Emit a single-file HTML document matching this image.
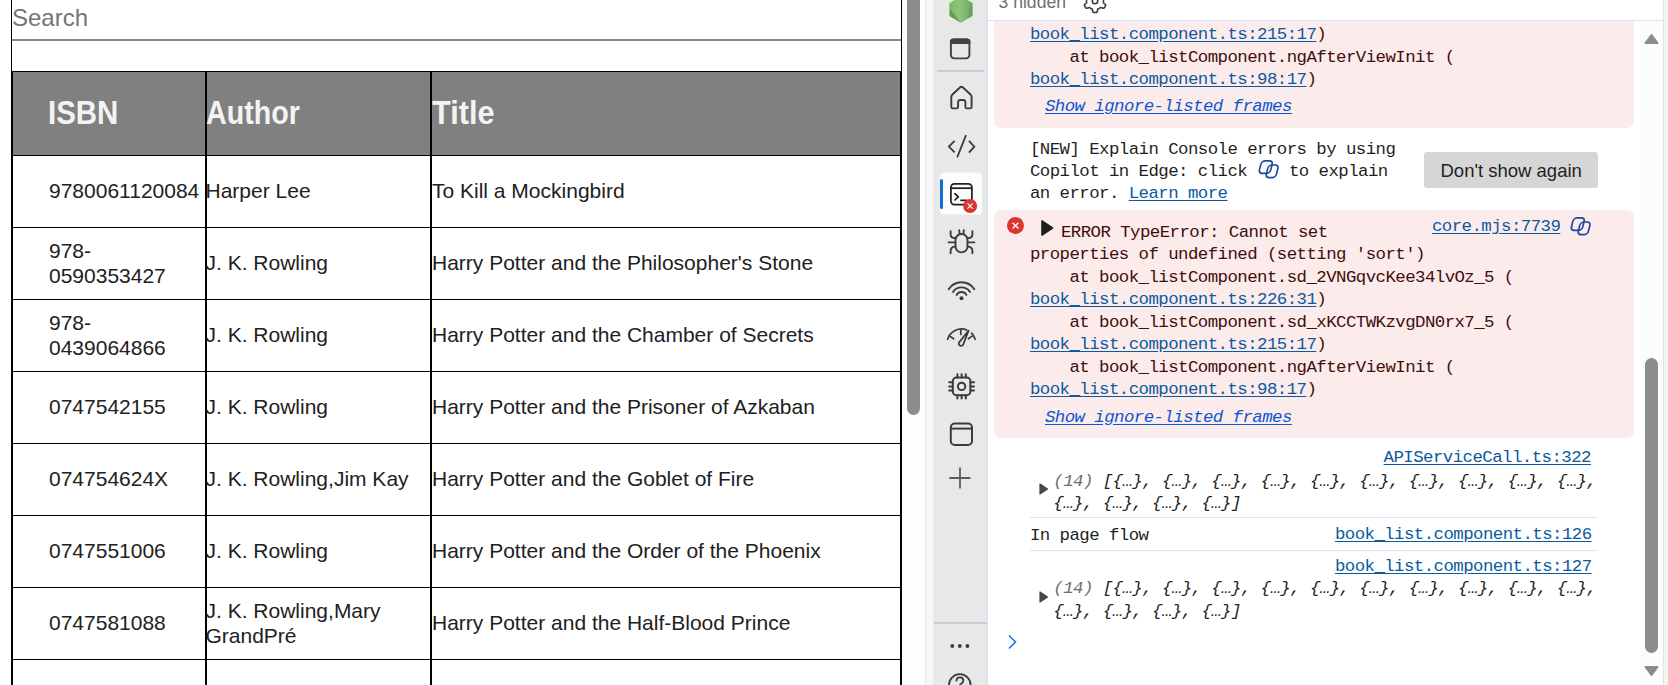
<!DOCTYPE html>
<html><head><meta charset="utf-8">
<style>
html,body{margin:0;padding:0;width:1668px;height:685px;overflow:hidden;background:#fff;position:relative;font-family:"Liberation Sans",sans-serif;}
.a{position:absolute;}
.hl{position:absolute;height:1px;background:#000;}
.vl{position:absolute;width:2px;background:#000;}
.cell{position:absolute;display:flex;align-items:center;font-size:21px;line-height:25px;color:#212121;}
.hd{position:absolute;font-size:33px;font-weight:bold;color:#f3f3f3;line-height:34px;}
.mono{font-family:"Liberation Mono",monospace;font-size:16.46px;line-height:22.5px;white-space:pre;color:#1f1f1f;}
.ln{position:absolute;white-space:pre;font-family:"Liberation Mono",monospace;font-size:17.4px;letter-spacing:-0.564px;line-height:22.5px;}
.lk{color:#0b5aa0;text-decoration:underline;text-underline-offset:2px;}
.lk2{color:#0b57d0;text-decoration:underline;font-style:italic;text-underline-offset:2px;}
.err{color:#410e0b;}
.pink{position:absolute;background:#fcebeb;border-radius:7px;}
.it{font-style:italic;}
</style></head>
<body>
<!-- ============ LEFT PAGE ============ -->
<div class="a" style="left:12px;top:0;width:889px;height:40px;"></div>
<div class="a" style="left:12px;top:1px;font-size:24px;line-height:34px;color:#757575;">Search</div>
<div class="a" style="left:12px;top:39px;width:889px;height:2px;background:#898989;"></div>
<div class="a" style="left:11px;top:0;width:1px;height:71px;background:#000;"></div>
<div class="a" style="left:901px;top:0;width:1px;height:71px;background:#000;"></div>
<!-- header bg -->
<div class="a" style="left:12px;top:72px;width:889px;height:83px;background:#808080;"></div>
<!-- horizontal lines -->
<div class="hl" style="left:11px;top:71px;width:891px;"></div>
<div class="hl" style="left:11px;top:155px;width:891px;"></div>
<div class="hl" style="left:11px;top:227px;width:891px;"></div>
<div class="hl" style="left:11px;top:299px;width:891px;"></div>
<div class="hl" style="left:11px;top:371px;width:891px;"></div>
<div class="hl" style="left:11px;top:443px;width:891px;"></div>
<div class="hl" style="left:11px;top:515px;width:891px;"></div>
<div class="hl" style="left:11px;top:587px;width:891px;"></div>
<div class="hl" style="left:11px;top:659px;width:891px;"></div>
<!-- vertical lines -->
<div class="vl" style="left:11px;top:71px;height:614px;"></div>
<div class="vl" style="left:205px;top:71px;height:614px;"></div>
<div class="vl" style="left:430px;top:71px;height:614px;"></div>
<div class="vl" style="left:900px;top:71px;height:614px;"></div>
<!-- header text -->
<div class="hd" style="left:48px;top:95.5px;transform:scaleX(0.893);transform-origin:0 0;">ISBN</div>
<div class="hd" style="left:206px;top:95.5px;transform:scaleX(0.868);transform-origin:0 0;">Author</div>
<div class="hd" style="left:432px;top:95.5px;transform:scaleX(0.929);transform-origin:0 0;">Title</div>
<!-- rows -->
<div class="cell" style="left:49px;top:155px;width:155px;height:71px;">9780061120084</div>
<div class="cell" style="left:205.5px;top:155px;width:223px;height:71px;">Harper Lee</div>
<div class="cell" style="left:432px;top:155px;width:468px;height:71px;">To Kill a Mockingbird</div>

<div class="cell" style="left:49px;top:227px;width:155px;height:71px;">978-<br>0590353427</div>
<div class="cell" style="left:205.5px;top:227px;width:223px;height:71px;">J. K. Rowling</div>
<div class="cell" style="left:432px;top:227px;width:468px;height:71px;">Harry Potter and the Philosopher's Stone</div>

<div class="cell" style="left:49px;top:299px;width:155px;height:71px;">978-<br>0439064866</div>
<div class="cell" style="left:205.5px;top:299px;width:223px;height:71px;">J. K. Rowling</div>
<div class="cell" style="left:432px;top:299px;width:468px;height:71px;">Harry Potter and the Chamber of Secrets</div>

<div class="cell" style="left:49px;top:371px;width:155px;height:71px;">0747542155</div>
<div class="cell" style="left:205.5px;top:371px;width:223px;height:71px;">J. K. Rowling</div>
<div class="cell" style="left:432px;top:371px;width:468px;height:71px;">Harry Potter and the Prisoner of Azkaban</div>

<div class="cell" style="left:49px;top:443px;width:155px;height:71px;">074754624X</div>
<div class="cell" style="left:205.5px;top:443px;width:223px;height:71px;">J. K. Rowling,Jim Kay</div>
<div class="cell" style="left:432px;top:443px;width:468px;height:71px;">Harry Potter and the Goblet of Fire</div>

<div class="cell" style="left:49px;top:515px;width:155px;height:71px;">0747551006</div>
<div class="cell" style="left:205.5px;top:515px;width:223px;height:71px;">J. K. Rowling</div>
<div class="cell" style="left:432px;top:515px;width:468px;height:71px;">Harry Potter and the Order of the Phoenix</div>

<div class="cell" style="left:49px;top:587px;width:155px;height:71px;">0747581088</div>
<div class="cell" style="left:205.5px;top:587px;width:223px;height:71px;">J. K. Rowling,Mary<br>GrandPré</div>
<div class="cell" style="left:432px;top:587px;width:468px;height:71px;">Harry Potter and the Half-Blood Prince</div>

<!-- page scrollbar -->
<div class="a" style="left:902px;top:0;width:23px;height:685px;background:#fdfdfd;"></div>
<div class="a" style="left:907px;top:-10px;width:13px;height:425px;background:#8c8c8c;border-radius:6.5px;"></div>
<div class="a" style="left:925px;top:0;width:1px;height:685px;background:#e6e6e6;"></div>
<div class="a" style="left:926px;top:0;width:7px;height:685px;background:#f6f6f6;"></div>

<!-- ============ ACTIVITY BAR ============ -->
<div class="a" id="act" style="left:933px;top:0;width:54px;height:685px;background:#e8e8e8;"></div>
<div class="a" style="left:987px;top:0;width:1px;height:685px;background:#cde0fb;"></div>

<!-- ============ CONSOLE ============ -->
<div class="a" style="left:988px;top:0;width:675px;height:685px;background:#fff;"></div>
<div class="a" style="left:988px;top:20px;width:675px;height:1px;background:#d3e3fd;"></div>
<div class="a" style="left:1663px;top:0;width:5px;height:685px;background:#f4f4f4;"></div>
<div class="a" style="left:1663px;top:0;width:1px;height:685px;background:#e3e3e3;"></div>

<div class="pink" style="left:994px;top:14px;width:640px;height:114px;"></div>
<div class="ln" style="left:1030px;top:24.36px;color:#410e0b;"><span class="lk">book_list.component.ts:215:17</span>)</div>
<div class="ln" style="left:1030px;top:46.86px;color:#410e0b;">    at book_listComponent.ngAfterViewInit (</div>
<div class="ln" style="left:1030px;top:69.36px;color:#410e0b;"><span class="lk">book_list.component.ts:98:17</span>)</div>
<div class="ln" style="left:1045px;top:96.36px;"><span class="lk2">Show ignore-listed frames</span></div>
<div class="ln" style="left:1030px;top:138.86px;color:#1f1f1f;">[NEW] Explain Console errors by using</div>
<div class="ln" style="left:1030px;top:161.36px;color:#1f1f1f;">Copilot in Edge: click <span style="display:inline-block;width:22px;"></span> to explain</div>
<div class="ln" style="left:1030px;top:183.36px;color:#1f1f1f;">an error. <span class="lk">Learn more</span></div>
<div class="pink" style="left:994px;top:210px;width:640px;height:228px;"></div>
<div class="ln" style="left:1061px;top:221.86px;color:#410e0b;">ERROR TypeError: Cannot set</div>
<div class="ln" style="left:1432px;top:215.86px;"><span class="lk">core.mjs:7739</span></div>
<div class="ln" style="left:1030px;top:244.36px;color:#410e0b;">properties of undefined (setting 'sort')</div>
<div class="ln" style="left:1030px;top:266.86px;color:#410e0b;">    at book_listComponent.sd_2VNGqvcKee34lvOz_5 (</div>
<div class="ln" style="left:1030px;top:289.36px;color:#410e0b;"><span class="lk">book_list.component.ts:226:31</span>)</div>
<div class="ln" style="left:1030px;top:311.86px;color:#410e0b;">    at book_listComponent.sd_xKCCTWKzvgDN0rx7_5 (</div>
<div class="ln" style="left:1030px;top:334.36px;color:#410e0b;"><span class="lk">book_list.component.ts:215:17</span>)</div>
<div class="ln" style="left:1030px;top:356.86px;color:#410e0b;">    at book_listComponent.ngAfterViewInit (</div>
<div class="ln" style="left:1030px;top:379.36px;color:#410e0b;"><span class="lk">book_list.component.ts:98:17</span>)</div>
<div class="ln" style="left:1045px;top:406.86px;"><span class="lk2">Show ignore-listed frames</span></div>
<div class="ln" style="left:1383.6px;top:447.36px;"><span class="lk">APIServiceCall.ts:322</span></div>
<div class="ln" style="left:1053.3px;top:471.36px;font-style:italic;color:#1f1f1f;"><span style="color:#6e6e6e">(14)</span> [{…}, {…}, {…}, {…}, {…}, {…}, {…}, {…}, {…}, {…},</div>
<div class="ln" style="left:1053.3px;top:492.96px;font-style:italic;color:#1f1f1f;">{…}, {…}, {…}, {…}]</div>
<div class="a" style="left:1030px;top:517px;width:567px;height:1px;background:#d6e3f7;"></div>
<div class="ln" style="left:1030px;top:524.86px;color:#1f1f1f;">In page flow</div>
<div class="ln" style="left:1334.9px;top:523.86px;"><span class="lk">book_list.component.ts:126</span></div>
<div class="a" style="left:1030px;top:550px;width:567px;height:1px;background:#d6e3f7;"></div>
<div class="ln" style="left:1334.9px;top:556.36px;"><span class="lk">book_list.component.ts:127</span></div>
<div class="ln" style="left:1053.3px;top:577.76px;font-style:italic;color:#1f1f1f;"><span style="color:#6e6e6e">(14)</span> [{…}, {…}, {…}, {…}, {…}, {…}, {…}, {…}, {…}, {…},</div>
<div class="ln" style="left:1053.3px;top:600.76px;font-style:italic;color:#1f1f1f;">{…}, {…}, {…}, {…}]</div>

<!-- header cover -->
<div class="a" style="left:988px;top:0;width:675px;height:20px;background:#fff;"></div>
<div class="a" style="left:988px;top:20px;width:675px;height:1px;background:#d3e3fd;"></div>
<div class="a" style="left:998.5px;top:-8.8px;font-size:17.6px;line-height:22px;color:#707070;">3 hidden</div>
<svg class="a" style="left:1080px;top:-14.4px;" width="30" height="30" viewBox="0 0 30 30">
 <path d="M23.5 15.0L23.5 15.4L23.5 15.9L23.4 16.3L23.4 16.8L24.2 17.5L25.3 18.4L25.7 19.1L25.5 19.7L25.2 20.2L25.0 20.8L24.6 21.3L24.3 21.8L23.9 22.2L23.1 22.3L21.8 21.8L20.7 21.4L20.3 21.6L20.0 21.9L19.6 22.1L19.2 22.4L18.9 22.6L18.5 22.8L18.0 22.9L17.7 23.2L17.5 24.2L17.3 25.6L16.8 26.4L16.2 26.4L15.6 26.5L15.0 26.5L14.4 26.5L13.8 26.4L13.2 26.4L12.7 25.6L12.5 24.2L12.3 23.2L12.0 22.9L11.5 22.8L11.1 22.6L10.8 22.4L10.4 22.1L10.0 21.9L9.7 21.6L9.3 21.4L8.2 21.8L6.9 22.3L6.1 22.2L5.7 21.8L5.4 21.3L5.0 20.8L4.8 20.2L4.5 19.7L4.3 19.1L4.7 18.4L5.8 17.5L6.6 16.8L6.6 16.3L6.5 15.9L6.5 15.4L6.5 15.0L6.5 14.6L6.5 14.1L6.6 13.7L6.6 13.2L5.8 12.5L4.7 11.6L4.3 10.9L4.5 10.3L4.8 9.8L5.0 9.3L5.4 8.7L5.7 8.2L6.1 7.8L6.9 7.7L8.2 8.2L9.3 8.6L9.7 8.4L10.0 8.1L10.4 7.9L10.7 7.6L11.1 7.4L11.5 7.2L12.0 7.1L12.3 6.8L12.5 5.8L12.7 4.4L13.2 3.6L13.8 3.6L14.4 3.5L15.0 3.5L15.6 3.5L16.2 3.6L16.8 3.6L17.3 4.4L17.5 5.8L17.7 6.8L18.0 7.1L18.5 7.2L18.9 7.4L19.2 7.6L19.6 7.9L20.0 8.1L20.3 8.4L20.7 8.6L21.8 8.2L23.1 7.7L23.9 7.8L24.3 8.2L24.6 8.7L25.0 9.3L25.2 9.8L25.5 10.3L25.7 10.9L25.3 11.6L24.2 12.5L23.4 13.2L23.4 13.7L23.5 14.1L23.5 14.6Z" fill="none" stroke="#3d3d3d" stroke-width="1.6" stroke-linejoin="round"/>
 <circle cx="15" cy="15" r="2.7" fill="none" stroke="#3d3d3d" stroke-width="1.6"/>
</svg>

<!-- Don't show again button -->
<div class="a" style="left:1424px;top:152px;width:174px;height:36px;background:#d6d6d6;border-radius:3px;"></div>
<div class="a" style="left:1440.5px;top:159.8px;font-size:18.5px;line-height:22px;color:#1f1f1f;white-space:pre;">Don't show again</div>

<!-- copilot icons -->
<svg class="a" style="left:1252px;top:156px;" width="34" height="26" viewBox="0 0 34 26">
 <g fill="none" stroke="#1d4b9e" stroke-width="1.7">
  <rect x="0" y="0" width="11.3" height="12.5" rx="3.4" transform="translate(9.7,4.85) skewX(-14)"/>
  <rect x="0" y="0" width="10.1" height="12.55" rx="3.4" transform="translate(16.6,9) skewX(-14)"/>
 </g>
</svg>
<svg class="a" style="left:1563.7px;top:212.5px;" width="34" height="26" viewBox="0 0 34 26">
 <g fill="none" stroke="#1d4b9e" stroke-width="1.7">
  <rect x="0" y="0" width="11.3" height="12.5" rx="3.4" transform="translate(9.7,4.85) skewX(-14)"/>
  <rect x="0" y="0" width="10.1" height="12.55" rx="3.4" transform="translate(16.6,9) skewX(-14)"/>
 </g>
</svg>

<!-- error circle + triangles -->
<svg class="a" style="left:1000px;top:210px;" width="60" height="30" viewBox="0 0 60 30">
 <circle cx="15.5" cy="15.6" r="8.5" fill="#dc3532"/>
 <path d="M12.6 12.7 L18.4 18.5 M18.4 12.7 L12.6 18.5" stroke="#fff" stroke-width="1.3"/>
 <path d="M42 11 L42 25 L52.5 18 Z" fill="#1f1f1f" stroke="#1f1f1f" stroke-width="1.6" stroke-linejoin="round"/>
</svg>
<svg class="a" style="left:1030px;top:475px;" width="24" height="30" viewBox="0 0 24 30">
 <path d="M10 9 L10 19 L17.5 14 Z" fill="#474747" stroke="#474747" stroke-width="1.2" stroke-linejoin="round"/>
</svg>
<svg class="a" style="left:1030px;top:583px;" width="24" height="30" viewBox="0 0 24 30">
 <path d="M10 9 L10 19 L17.5 14 Z" fill="#474747" stroke="#474747" stroke-width="1.2" stroke-linejoin="round"/>
</svg>
<!-- prompt -->
<svg class="a" style="left:1000px;top:630px;" width="24" height="24" viewBox="0 0 24 24">
 <path d="M9 5.5 L15.5 12 L9 18.5" fill="none" stroke="#1a73e8" stroke-width="1.6"/>
</svg>

<!-- console scrollbar -->
<div class="a" style="left:1640px;top:21px;width:23px;height:664px;background:#fcfcfc;"></div>
<div class="a" style="left:1645px;top:358px;width:13px;height:295px;background:#8c8c8c;border-radius:6.5px;"></div>
<svg class="a" style="left:1640px;top:28px;" width="23" height="22" viewBox="0 0 23 22">
 <path d="M11.5 7 L17.5 15 L5.5 15 Z" fill="#8c8c8c" stroke="#8c8c8c" stroke-width="2" stroke-linejoin="round"/>
</svg>
<svg class="a" style="left:1640px;top:660px;" width="23" height="22" viewBox="0 0 23 22">
 <path d="M5.5 7 L17.5 7 L11.5 15 Z" fill="#8c8c8c" stroke="#8c8c8c" stroke-width="2" stroke-linejoin="round"/>
</svg>

<!-- ============ ACTIVITY BAR ICONS ============ -->
<svg class="a" style="left:933px;top:0;" width="54" height="685" viewBox="0 0 54 685">
 <!-- node hex -->
 <defs><linearGradient id="ng" x1="0" y1="0" x2="1" y2="0"><stop offset="0" stop-color="#7fbf63"/><stop offset="0.45" stop-color="#8fc27a"/><stop offset="1" stop-color="#6aa75c"/></linearGradient></defs>
 <g transform="translate(28,9.5)">
  <polygon points="0,-13.2 11.4,-6.6 11.4,6.6 0,13.2 -11.4,6.6 -11.4,-6.6" fill="url(#ng)"/>
  <polygon points="-11.4,-1.5 -11.4,6.6 -0.3,13.2" fill="#619f51"/>
  <polygon points="-11.4,-6.6 -11.4,-1.5 -8.5,-3.5" fill="#78b35f"/>
  <polygon points="11.4,-6.6 11.4,6.6 7,8.6 9,-2" fill="#659f55" opacity="0.8"/>
 </g>
 <!-- window icon -->
 <rect x="17.9" y="39.5" width="18.5" height="18.9" rx="3.3" fill="none" stroke="#424242" stroke-width="1.9"/>
 <rect x="16.95" y="38.55" width="20.4" height="5.4" rx="3" fill="#424242"/>
 <rect x="16.95" y="41" width="20.4" height="3" fill="#424242"/>
 <!-- separator -->
 <rect x="4" y="70" width="47" height="2" fill="#c9cdd3"/>
 <!-- home -->
 <path d="M18.3 97 Q18.3 95.5 19.4 94.5 L27.2 87.3 Q28.45 86.2 29.7 87.3 L37.5 94.5 Q38.6 95.5 38.6 97 L38.6 106.9 Q38.6 108.4 37.1 108.4 L33.9 108.4 Q32.4 108.4 32.4 106.9 L32.4 102.2 Q32.4 100 30.2 100 L27.3 100 Q25.1 100 25.1 102.2 L25.1 106.9 Q25.1 108.4 23.6 108.4 L19.8 108.4 Q18.3 108.4 18.3 106.9 Z" fill="none" stroke="#3a3a3a" stroke-width="1.9" stroke-linejoin="round"/>
 <!-- code -->
 <path d="M21.6 140.8 L15.9 146.6 L21.6 152.4 M36 140.8 L41.3 146.7 L36 152.6 M33 135.2 L24.2 157.3" fill="none" stroke="#3a3a3a" stroke-width="1.8" stroke-linecap="butt" stroke-linejoin="miter"/>
 <!-- console tab selected -->
 <rect x="7" y="172.6" width="42" height="42" rx="4" fill="#fcfcfc"/>
 <rect x="7" y="179" width="3" height="30" rx="1.5" fill="#0c70cf"/>
 <rect x="17.9" y="183.9" width="21" height="20.8" rx="3.6" fill="none" stroke="#1f1f1f" stroke-width="1.75"/>
 <path d="M17.9 188.2 L38.9 188.2" stroke="#1f1f1f" stroke-width="1.75"/>
 <path d="M21.9 193.6 L25.3 196.8 L21.9 200 M28 200.3 L33.5 200.3" fill="none" stroke="#1f1f1f" stroke-width="1.7" stroke-linecap="round" stroke-linejoin="round"/>
 <circle cx="37.1" cy="206" r="7" fill="#d8352f"/>
 <path d="M34.5 203.4 L39.7 208.6 M39.7 203.4 L34.5 208.6" stroke="#fff" stroke-width="1.1"/>
 <!-- bug -->
 <g fill="none" stroke="#3c3c3c" stroke-width="1.9" stroke-linecap="round" stroke-linejoin="round">
  <rect x="22.5" y="234" width="12" height="18.4" rx="6"/>
  <path d="M26.2 230.3 L26.6 233.6 M30.8 230.3 L30.4 233.6"/>
  <path d="M17.6 231.2 L17.6 234.6 Q17.6 238.2 22.3 238.2 M39.4 231.2 L39.4 234.6 Q39.4 238.2 34.7 238.2"/>
  <path d="M15.6 242.4 L22.3 242.4 M34.7 242.4 L41.4 242.4"/>
  <path d="M22.3 246.6 Q17.6 246.6 17.6 251.2 L17.6 253.2 M34.7 246.6 Q39.4 246.6 39.4 251.2 L39.4 253.2"/>
 </g>
 <!-- wifi -->
 <g fill="none" stroke="#3c3c3c" stroke-width="1.9" stroke-linecap="round">
  <path d="M15.67 289.17 A15.3 15.3 0 0 1 41.33 289.17"/>
  <path d="M20.03 292 A10.1 10.1 0 0 1 36.97 292"/>
  <path d="M23.64 294.92 A5.5 5.5 0 0 1 33.36 294.92"/>
 </g>
 <circle cx="28.5" cy="298.3" r="2" fill="#3c3c3c"/>
 <!-- gauge -->
 <g fill="none" stroke="#3c3c3c" stroke-width="1.75" stroke-linecap="round" stroke-linejoin="round">
  <path d="M14.65 339.23 A14.34 14.34 0 0 1 33.60 329.94 M38.60 333.22 A14.34 14.34 0 0 1 42.15 339.23"/>
  <path d="M27.8 329.8 L27.8 334.4 M16.8 336.1 L20.6 338.8 M39.1 336.1 L35.4 338.8"/>
  <path d="M35.6 330.6 L30.24 344.43 A2.3 2.3 0 1 1 26.31 342.16 Z"/>
 </g>
 <!-- chip -->
 <g fill="none" stroke="#3c3c3c" stroke-width="2" stroke-linecap="round" stroke-linejoin="round">
  <rect x="19.8" y="377.6" width="17.6" height="17.6" rx="3.6"/>
  <circle cx="28.6" cy="386.4" r="3.7"/>
  <path d="M24.4 377.6 V374.2 M28.6 377.6 V374.2 M32.8 377.6 V374.2 M24.4 395.2 V398.6 M28.6 395.2 V398.6 M32.8 395.2 V398.6 M19.8 382.2 H16.2 M19.8 386.4 H16.2 M19.8 390.6 H16.2 M37.4 382.2 H41 M37.4 386.4 H41 M37.4 390.6 H41"/>
 </g>
 <!-- app window -->
 <g fill="none" stroke="#3c3c3c" stroke-width="2">
  <rect x="17.8" y="423.6" width="21.2" height="21.4" rx="4"/>
  <path d="M17.8 428.6 H39"/>
 </g>
 <!-- plus -->
 <path d="M27 467.5 V488.6 M16.3 478 H37.4" stroke="#5e5e5e" stroke-width="1.8"/>
 <!-- bottom separator -->
 <rect x="1" y="622" width="53" height="2" fill="#c9cdd3"/>
 <!-- dots -->
 <circle cx="19.3" cy="646" r="1.9" fill="#3c3c3c"/>
 <circle cx="26.8" cy="646" r="1.9" fill="#3c3c3c"/>
 <circle cx="34.4" cy="646" r="1.9" fill="#3c3c3c"/>
 <!-- help -->
 <circle cx="26.8" cy="685" r="10.8" fill="none" stroke="#3c3c3c" stroke-width="1.8"/>
 <path d="M23.4 681.5 Q23.4 677.4 26.9 677.4 Q30.3 677.4 30.3 680.6 Q30.3 682.8 27.8 684 Q26.8 684.6 26.8 686" fill="none" stroke="#3c3c3c" stroke-width="1.8"/>
</svg>

</body></html>
